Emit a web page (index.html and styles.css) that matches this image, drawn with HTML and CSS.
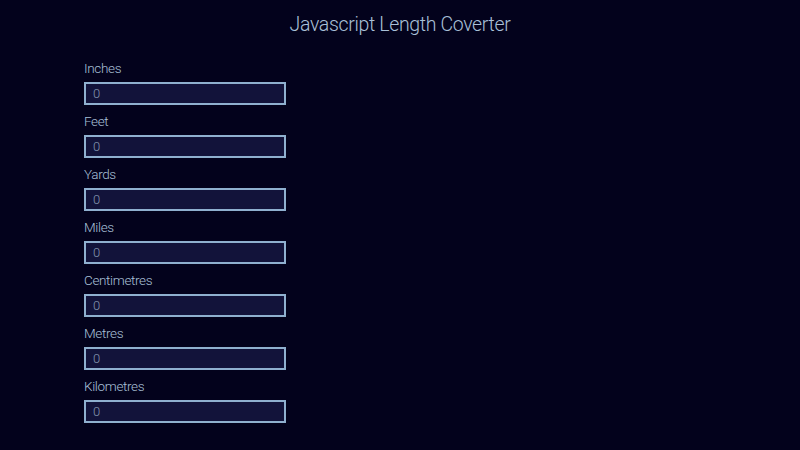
FILE: index.html
```html
<!DOCTYPE html>
<html>
<head>
<meta charset="utf-8">
<link rel="stylesheet" href="styles.css">
</head>
<body>
<h1 class="title">Javascript Length Coverter</h1>
<div class="form">
  <div class="field"><label class="label">Inches</label><input class="input" type="text" placeholder="0"></div>
  <div class="field"><label class="label">Feet</label><input class="input" type="text" placeholder="0"></div>
  <div class="field"><label class="label">Yards</label><input class="input" type="text" placeholder="0"></div>
  <div class="field"><label class="label">Miles</label><input class="input" type="text" placeholder="0"></div>
  <div class="field"><label class="label">Centimetres</label><input class="input" type="text" placeholder="0"></div>
  <div class="field"><label class="label">Metres</label><input class="input" type="text" placeholder="0"></div>
  <div class="field"><label class="label">Kilometres</label><input class="input" type="text" placeholder="0"></div>
</div>
</body>
</html>
```
FILE: styles.css
```css
html, body {
  margin: 0;
  padding: 0;
  background: #03021c;
  height: 100%;
}
body {
  font-family: "Roboto", "Liberation Sans", sans-serif;
  font-weight: 300;
  color: #a9c0d8;
}
.title {
  margin: 10px 0 0;
  font-size: 19.5px;
  letter-spacing: -0.35px;
  line-height: 30px;
  font-weight: 300;
  text-align: center;
  color: #a9c0d8;
}
.form {
  padding: 18px 0 0 84px;
  display: flex;
  flex-direction: column;
  gap: 6px;
}
.field {
  display: flex;
  flex-direction: column;
  align-items: flex-start;
  gap: 4px;
}
.label {
  font-size: 13.5px;
  letter-spacing: -0.35px;
  line-height: 20px;
}
.input {
  box-sizing: border-box;
  width: 202px;
  height: 23px;
  margin: 0;
  padding: 0 0 0 7px;
  border: 2px solid #8fb0cf;
  background: #12133a;
  font-family: inherit;
  font-weight: 300;
  font-size: 13px;
  color: #a9c0d8;
  outline: none;
}
.input::placeholder {
  color: #8597b0;
  opacity: 1;
}
```
